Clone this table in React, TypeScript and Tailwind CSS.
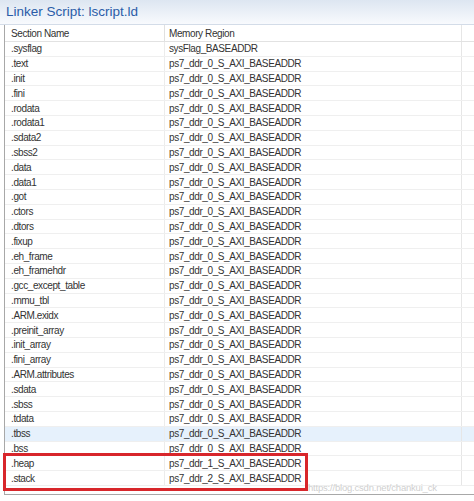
import React from 'react';

const rows: [string, string][] = [
  ['.sysflag', 'sysFlag_BASEADDR'],
  ['.text', 'ps7_ddr_0_S_AXI_BASEADDR'],
  ['.init', 'ps7_ddr_0_S_AXI_BASEADDR'],
  ['.fini', 'ps7_ddr_0_S_AXI_BASEADDR'],
  ['.rodata', 'ps7_ddr_0_S_AXI_BASEADDR'],
  ['.rodata1', 'ps7_ddr_0_S_AXI_BASEADDR'],
  ['.sdata2', 'ps7_ddr_0_S_AXI_BASEADDR'],
  ['.sbss2', 'ps7_ddr_0_S_AXI_BASEADDR'],
  ['.data', 'ps7_ddr_0_S_AXI_BASEADDR'],
  ['.data1', 'ps7_ddr_0_S_AXI_BASEADDR'],
  ['.got', 'ps7_ddr_0_S_AXI_BASEADDR'],
  ['.ctors', 'ps7_ddr_0_S_AXI_BASEADDR'],
  ['.dtors', 'ps7_ddr_0_S_AXI_BASEADDR'],
  ['.fixup', 'ps7_ddr_0_S_AXI_BASEADDR'],
  ['.eh_frame', 'ps7_ddr_0_S_AXI_BASEADDR'],
  ['.eh_framehdr', 'ps7_ddr_0_S_AXI_BASEADDR'],
  ['.gcc_except_table', 'ps7_ddr_0_S_AXI_BASEADDR'],
  ['.mmu_tbl', 'ps7_ddr_0_S_AXI_BASEADDR'],
  ['.ARM.exidx', 'ps7_ddr_0_S_AXI_BASEADDR'],
  ['.preinit_array', 'ps7_ddr_0_S_AXI_BASEADDR'],
  ['.init_array', 'ps7_ddr_0_S_AXI_BASEADDR'],
  ['.fini_array', 'ps7_ddr_0_S_AXI_BASEADDR'],
  ['.ARM.attributes', 'ps7_ddr_0_S_AXI_BASEADDR'],
  ['.sdata', 'ps7_ddr_0_S_AXI_BASEADDR'],
  ['.sbss', 'ps7_ddr_0_S_AXI_BASEADDR'],
  ['.tdata', 'ps7_ddr_0_S_AXI_BASEADDR'],
  ['.tbss', 'ps7_ddr_0_S_AXI_BASEADDR'],
  ['.bss', 'ps7_ddr_0_S_AXI_BASEADDR'],
  ['.heap', 'ps7_ddr_1_S_AXI_BASEADDR'],
  ['.stack', 'ps7_ddr_2_S_AXI_BASEADDR'],
];

export default function App() {
  return (
    <div className="relative w-[474px] h-[501px] overflow-hidden bg-white font-['Liberation_Sans',sans-serif] text-[#333]">
      {/* view title */}
      <div className="h-[25px] flex items-center pl-[6px] bg-gradient-to-b from-[#dde6f1] to-[#f8fafd] border-b border-[#d3dce8]">
        <span className="text-[13.5px] text-[#2a5ca8]">Linker Script: lscript.ld</span>
      </div>

      <div className="ml-[4px] h-[470px] border-l border-b border-[#a8a8a8] text-[10px] tracking-[-0.4px]">
        <div className="flex h-[17px] border-b border-[#e2e2e2]">
          <div className="w-[160px] pl-[6px] flex items-center border-r border-[#e0e0e0]">Section Name</div>
          <div className="w-[297px] pl-[4px] flex items-center border-r border-[#e6e6e6]">Memory Region</div>
          <div className="flex-1" />
        </div>
        {rows.map(([name, region]) => (
          <div
            key={name}
            className={`flex h-[14.8px] border-b border-[#efefef] ${name === '.tbss' ? 'bg-[#e6f1fc]' : ''}`}
          >
            <div className="w-[160px] pl-[6px] flex items-center border-r border-[#ececec]">{name}</div>
            <div className="w-[297px] pl-[4px] flex items-center border-r border-[#e6e6e6]">{region}</div>
            <div className="flex-1" />
          </div>
        ))}
      </div>

      {/* highlight box */}
      <div className="absolute left-[3px] top-[453px] w-[305px] h-[38px] border-[3px] border-[#d8262b]" />

      <span className="absolute left-[308px] top-[481px] text-[9.5px] tracking-[-0.2px] text-[#cfcfcf]">https://blog.csdn.net/chankui_ck</span>
    </div>
  );
}
